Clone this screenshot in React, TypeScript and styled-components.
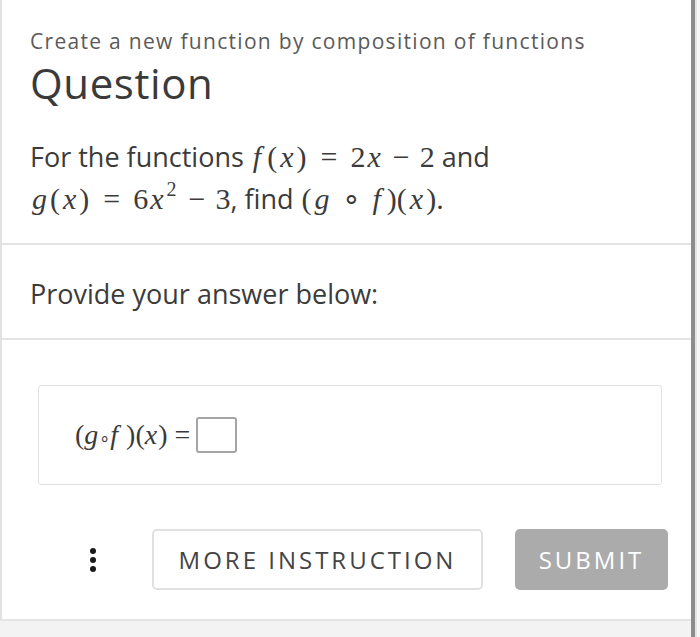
import React from "react";
import styled, { createGlobalStyle } from "styled-components";

const GlobalStyle = createGlobalStyle`
  html, body {
    margin: 0;
    padding: 0;
    background: #ffffff;
  }
  body {
    font-family: "Open Sans", "Noto Sans", sans-serif;
    color: #333;
  }
`;

const Page = styled.div`
  display: flex;
  width: 700px;
  height: 637px;
  overflow: hidden;
`;

const Main = styled.div`
  width: 691px;
  display: flex;
  flex-direction: column;
  background: #f3f3f3;
`;

const ScrollBar = styled.div`
  width: 4px;
  background: #8c8c8c;
`;

const Gutter = styled.div`
  flex: 1;
  background: #f7f7f7;
  border-left: 2px solid #e4e4e4;
`;

const Card = styled.div`
  background: #fff;
  border-left: 2px solid #e2e2e2;
  border-bottom: 2px solid #e4e4e4;
  height: 621px;
  box-sizing: border-box;
  display: flex;
  flex-direction: column;
`;

const Section = styled.div<{ $pad: string; $divider?: boolean }>`
  padding: ${(p) => p.$pad};
  border-bottom: ${(p) => (p.$divider ? "2px solid #e3e3e3" : "none")};
`;

const Subtitle = styled.div`
  font-size: 21px;
  letter-spacing: 1.3px;
  color: #5a5a5a;
  line-height: 28px;
`;

const Title = styled.h1`
  margin: 4px 0 0;
  font-size: 42px;
  font-weight: 400;
  letter-spacing: 0.6px;
  line-height: 48px;
  color: #3a3a3a;
`;

const Prose = styled.p<{ $gap?: number; $size: number }>`
  margin: ${(p) => p.$gap ?? 0}px 0 0;
  font-size: ${(p) => p.$size}px;
  line-height: 42px;
  color: #3b3b3b;
`;

// inline TeX-ish math pieces
const Mi = styled.span<{ $r?: number }>`
  font-family: "Liberation Serif", "Times New Roman", serif;
  font-style: italic;
  font-size: 30px;
  padding: 0 ${(p) => p.$r ?? 2}px 0 2px;
`;

const Mn = styled.span`
  font-family: "Liberation Serif", "Times New Roman", serif;
  font-size: 30px;
`;

const Paren = styled(Mn)`
  padding: 0 1px;
`;

const Mo = styled(Mn)<{ $space: number }>`
  margin: 0 ${(p) => p.$space}px;
`;

const Sup = styled.sup`
  font-family: "Liberation Serif", "Times New Roman", serif;
  font-size: 20px;
  line-height: 0;
  vertical-align: 13px;
  margin: 0 2px 0 1px;
`;

const AnswerBox = styled.div`
  margin: 0 29px 0 36px;
  height: 100px;
  box-sizing: border-box;
  border: 1px solid #e2e2e2;
  border-radius: 3px;
  display: flex;
  align-items: center;
  padding-left: 36px;
`;

const Expr = styled.span`
  font-family: "Liberation Serif", "Times New Roman", serif;
  font-size: 28px;
  color: #3a3a3a;
  display: flex;
  align-items: center;
  i {
    padding-right: 1px;
  }
`;

const Ring = styled.span`
  font-size: 18px;
`;

const Blank = styled.span`
  display: inline-block;
  width: 41px;
  height: 36px;
  box-sizing: border-box;
  margin-left: 6px;
  border: 2px solid #a5a5a5;
  border-radius: 3px;
`;

const Actions = styled.div`
  display: flex;
  align-items: center;
  padding: 44px 0 0 82px;
`;

const Dots = styled.div`
  width: 18px;
  display: flex;
  flex-direction: column;
  align-items: center;
  gap: 3px;
  margin-right: 50px;
  span {
    width: 6px;
    height: 6px;
    border-radius: 50%;
    background: #1a1a1a;
  }
`;

const Button = styled.button<{ $primary?: boolean }>`
  height: 61px;
  box-sizing: border-box;
  padding: 0;
  font-family: "Open Sans", sans-serif;
  font-size: 24px;
  letter-spacing: 3px;
  text-transform: uppercase;
  border-radius: 5px;
  border: ${(p) => (p.$primary ? "none" : "2px solid #e0e0e0")};
  background: ${(p) => (p.$primary ? "#ababab" : "#fff")};
  color: ${(p) => (p.$primary ? "#fff" : "#444")};
  margin-left: ${(p) => (p.$primary ? "32px" : "0")};
  width: ${(p) => (p.$primary ? "153px" : "331px")};
`;

export default function App() {
  return (
    <Page>
      <GlobalStyle />
      <Main>
        <Card>
          <Section $pad="27px 28px 23px 28px" $divider>
            <Subtitle>Create a new function by composition of functions</Subtitle>
            <Title>Question</Title>
            <Prose $gap={29} $size={27}>
              For the functions <Mi $r={5}>f</Mi>
              <Paren>(</Paren>
              <Mi>x</Mi>
              <Paren>)</Paren>
              <Mo $space={13}>=</Mo>
              <Mn>2</Mn>
              <Mi>x</Mi>
              <Mo $space={10}>−</Mo>
              <Mn>2</Mn> and
              <br />
              <Mi>g</Mi>
              <Paren>(</Paren>
              <Mi>x</Mi>
              <Paren>)</Paren>
              <Mo $space={13}>=</Mo>
              <Mn>6</Mn>
              <Mi>x</Mi>
              <Sup>2</Sup>
              <Mo $space={10}>−</Mo>
              <Mn>3</Mn>, find <Paren>(</Paren>
              <Mi>g</Mi>
              <Mo $space={10}>∘</Mo>
              <Mi $r={5}>f</Mi>
              <Paren>)(</Paren>
              <Mi>x</Mi>
              <Paren>).</Paren>
            </Prose>
          </Section>
          <Section $pad="28px 28px 23px 28px" $divider>
            <Prose $size={27}>Provide your answer below:</Prose>
          </Section>
          <Section $pad="45px 0 0 0">
            <AnswerBox>
              <Expr>
                <span>
                  (<i>g</i>
                  <Ring>∘</Ring>
                  <i>f</i> )(<i>x</i>) =
                </span>
                <Blank />
              </Expr>
            </AnswerBox>
          </Section>
          <Actions>
            <Dots>
              <span />
              <span />
              <span />
            </Dots>
            <Button>More instruction</Button>
            <Button $primary>Submit</Button>
          </Actions>
        </Card>
      </Main>
      <ScrollBar />
      <Gutter />
    </Page>
  );
}
